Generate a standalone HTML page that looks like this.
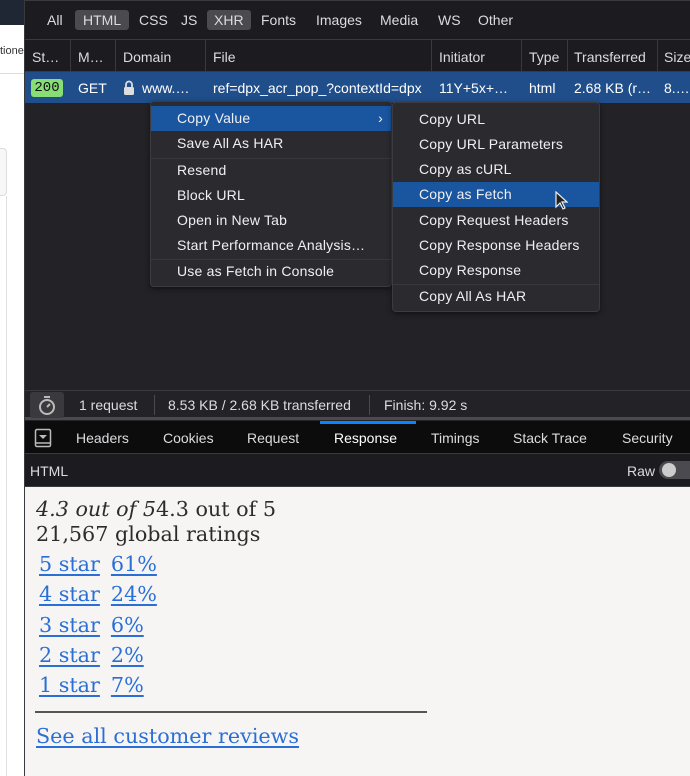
<!DOCTYPE html>
<html><head><meta charset="utf-8"><style>
*{margin:0;padding:0;box-sizing:border-box}
body{width:690px;height:776px;overflow:hidden;position:relative;background:#fff;font-family:"Liberation Sans",sans-serif;font-size:14px}
.a{position:absolute;white-space:nowrap}
.dt{color:#dcdcde}
.m{background:#2b2a2f;border:1px solid #3c3b40;border-radius:4px;box-shadow:0 2px 6px rgba(0,0,0,.5)}
.mi{position:absolute;left:0;right:0;height:25px;line-height:25px;color:#f0f0f2;letter-spacing:0.2px}
.sep{position:absolute;left:0;right:0;height:1px;background:#38373c}
.r{font-family:"DejaVu Serif",serif;font-size:20.7px;color:#2c2c2c}
.lk{color:#2a6fd6;text-decoration:underline;text-underline-offset:3px}
.p{margin-left:11px}
</style></head><body>
<div class="a" style="left:0;top:0;width:24px;height:25px;background:#1e2733"></div>
<div class="a" style="left:0;top:45px;font-size:11px;color:#333">tione</div>
<div class="a" style="left:0;top:73px;width:24px;height:1px;background:#ddd"></div>
<div class="a" style="left:-6px;top:148px;width:13px;height:48px;border:1px solid #ddd;border-radius:4px;background:#f7f7f7"></div>
<div class="a" style="left:6px;top:196px;width:1px;height:580px;background:#e0e0e0"></div>
<div class="a" style="left:24px;top:0;width:666px;height:487px;background:#232327;border-left:1px solid #3a3a3e"></div>
<div class="a" style="left:25px;top:0;width:665px;height:40px;background:#1c1b20;border-top:1px solid #3a3a3e;border-bottom:1px solid #3a3a3e"></div>
<div class="a" style="left:75px;top:10px;width:54px;height:20px;background:#4a4a4f;border-radius:3px"></div>
<div class="a" style="left:207px;top:10px;width:44px;height:20px;background:#4a4a4f;border-radius:3px"></div>
<div class="a dt" style="left:47px;top:12px">All</div>
<div class="a dt" style="left:83px;top:12px">HTML</div>
<div class="a dt" style="left:139px;top:12px">CSS</div>
<div class="a dt" style="left:181px;top:12px">JS</div>
<div class="a dt" style="left:214px;top:12px">XHR</div>
<div class="a dt" style="left:261px;top:12px">Fonts</div>
<div class="a dt" style="left:316px;top:12px">Images</div>
<div class="a dt" style="left:380px;top:12px">Media</div>
<div class="a dt" style="left:438px;top:12px">WS</div>
<div class="a dt" style="left:478px;top:12px">Other</div>
<div class="a" style="left:25px;top:40px;width:665px;height:32px;background:#1c1b20;border-bottom:1px solid #3a3a3e"></div>
<div class="a" style="left:70px;top:40px;width:1px;height:32px;background:#3a3a3e"></div>
<div class="a" style="left:115px;top:40px;width:1px;height:32px;background:#3a3a3e"></div>
<div class="a" style="left:205px;top:40px;width:1px;height:32px;background:#3a3a3e"></div>
<div class="a" style="left:431px;top:40px;width:1px;height:32px;background:#3a3a3e"></div>
<div class="a" style="left:521px;top:40px;width:1px;height:32px;background:#3a3a3e"></div>
<div class="a" style="left:567px;top:40px;width:1px;height:32px;background:#3a3a3e"></div>
<div class="a" style="left:657px;top:40px;width:1px;height:32px;background:#3a3a3e"></div>
<div class="a dt" style="left:32px;top:49px">St…</div>
<div class="a dt" style="left:78px;top:49px">M…</div>
<div class="a dt" style="left:123px;top:49px">Domain</div>
<div class="a dt" style="left:213px;top:49px">File</div>
<div class="a dt" style="left:439px;top:49px">Initiator</div>
<div class="a dt" style="left:529px;top:49px">Type</div>
<div class="a dt" style="left:574px;top:49px">Transferred</div>
<div class="a dt" style="left:664px;top:49px">Size</div>
<div class="a" style="left:25px;top:72px;width:665px;height:31px;background:#204e8a"></div>
<div class="a" style="left:31px;top:79px;width:32px;height:18px;background:#86de74;border-radius:3px;color:#111;font-family:'Liberation Mono',monospace;font-size:14px;line-height:18px;text-align:center">200</div>
<div class="a" style="color:#fff;left:78px;top:80px">GET</div>
<svg class="a" style="left:123px;top:80px" width="12" height="15" viewBox="0 0 12 15"><path d="M3 7V4.5a3 3 0 0 1 6 0V7" fill="none" stroke="#ddd" stroke-width="1.8"/><rect x="1" y="7" width="10" height="8" rx="1.5" fill="#ddd"/></svg>
<div class="a" style="color:#fff;left:142px;top:80px">www.…</div>
<div class="a" style="color:#fff;left:213px;top:80px">ref=dpx_acr_pop_?contextId=dpx</div>
<div class="a" style="color:#fff;left:439px;top:80px">11Y+5x+…</div>
<div class="a" style="color:#fff;left:529px;top:80px">html</div>
<div class="a" style="color:#fff;left:574px;top:80px">2.68 KB (r…</div>
<div class="a" style="color:#fff;left:664px;top:80px">8.…</div>
<div class="a m" style="left:150px;top:101px;width:242px;height:186px">
<div class="mi" style="top:4px;background:#1a55a0;padding-left:26px">Copy Value<span style="position:absolute;right:8px">›</span></div>
<div class="mi" style="top:29px;padding-left:26px">Save All As HAR</div>
<div class="sep" style="top:56px"></div>
<div class="mi" style="top:56px;padding-left:26px">Resend</div>
<div class="mi" style="top:81px;padding-left:26px">Block URL</div>
<div class="mi" style="top:106px;padding-left:26px">Open in New Tab</div>
<div class="mi" style="top:131px;padding-left:26px">Start Performance Analysis…</div>
<div class="sep" style="top:157px"></div>
<div class="mi" style="top:157px;padding-left:26px">Use as Fetch in Console</div>
</div>
<div class="a m" style="left:392px;top:102px;width:208px;height:210px">
<div class="mi" style="top:4px;padding-left:26px">Copy URL</div>
<div class="mi" style="top:29px;padding-left:26px">Copy URL Parameters</div>
<div class="mi" style="top:54px;padding-left:26px">Copy as cURL</div>
<div class="mi" style="top:79px;background:#1a55a0;padding-left:26px">Copy as Fetch</div>
<div class="mi" style="top:105px;padding-left:26px">Copy Request Headers</div>
<div class="mi" style="top:130px;padding-left:26px">Copy Response Headers</div>
<div class="mi" style="top:155px;padding-left:26px">Copy Response</div>
<div class="sep" style="top:181px"></div>
<div class="mi" style="top:181px;padding-left:26px">Copy All As HAR</div>
</div>
<svg class="a" style="left:555px;top:191px" width="13" height="20" viewBox="0 0 13 20"><path d="M1 1v15l4-4 3 6 2-1-3-6h5z" fill="#222" stroke="#eee" stroke-width="1.2"/></svg>
<div class="a" style="left:25px;top:390px;width:665px;height:30px;background:#232327;border-top:1px solid #3a3a3e;border-bottom:3px solid #4a4a4f"></div>
<div class="a" style="left:30px;top:392px;width:34px;height:26px;background:#3a3a3e;border-radius:3px"></div>
<svg class="a" style="left:37px;top:393px" width="20" height="24" viewBox="0 0 20 24"><circle cx="10" cy="14" r="7" fill="none" stroke="#bbb" stroke-width="2"/><path d="M7 4h6M10 14l3-3" stroke="#bbb" stroke-width="2" fill="none"/></svg>
<div class="a dt" style="left:79px;top:397px">1 request</div>
<div class="a" style="left:154px;top:395px;width:1px;height:20px;background:#4a4a4f"></div>
<div class="a dt" style="left:168px;top:397px">8.53 KB / 2.68 KB transferred</div>
<div class="a" style="left:369px;top:395px;width:1px;height:20px;background:#4a4a4f"></div>
<div class="a dt" style="left:384px;top:397px">Finish: 9.92 s</div>
<div class="a" style="left:25px;top:421px;width:665px;height:33px;background:#0c0c0d;border-bottom:1px solid #3a3a3e"></div>
<div class="a" style="left:320px;top:421px;width:96px;height:3px;background:#0a84ff"></div>
<svg class="a" style="left:34px;top:428px" width="18" height="20" viewBox="0 0 18 20"><rect x="1.5" y="1.5" width="15" height="17" rx="1.5" fill="none" stroke="#bbb" stroke-width="1.5"/><path d="M5 7h8l-4 4z" fill="#bbb"/><path d="M2 15h14" stroke="#bbb" stroke-width="1.5"/></svg>
<div class="a dt" style="left:76px;top:430px">Headers</div>
<div class="a dt" style="left:163px;top:430px">Cookies</div>
<div class="a dt" style="left:247px;top:430px">Request</div>
<div class="a" style="color:#fff;left:334px;top:430px">Response</div>
<div class="a dt" style="left:431px;top:430px">Timings</div>
<div class="a dt" style="left:513px;top:430px">Stack Trace</div>
<div class="a dt" style="left:622px;top:430px">Security</div>
<div class="a" style="left:25px;top:454px;width:665px;height:33px;background:#1c1b20;border-bottom:1px solid #3a3a3e"></div>
<div class="a dt" style="left:30px;top:463px;font-size:14px">HTML</div>
<div class="a dt" style="left:627px;top:463px">Raw</div>
<div class="a" style="left:659px;top:461px;width:40px;height:18px;background:#4a4a4f;border-radius:9px"></div>
<div class="a" style="left:662px;top:463px;width:14px;height:14px;background:#ccc;border-radius:7px"></div>
<div class="a" style="left:24px;top:487px;width:666px;height:289px;background:#f6f5f3;border-left:1px solid #3a3a3e"></div>
<div class="a r" style="left:36px;top:497px"><i>4.3 out of 5</i>4.3 out of 5</div>
<div class="a r" style="left:36px;top:522px">21,567 global ratings</div>
<div class="a r" style="left:39px;top:552px"><span class="lk">5 star</span><span class="lk p">61%</span></div>
<div class="a r" style="left:39px;top:582px"><span class="lk">4 star</span><span class="lk p">24%</span></div>
<div class="a r" style="left:39px;top:613px"><span class="lk">3 star</span><span class="lk p">6%</span></div>
<div class="a r" style="left:39px;top:643px"><span class="lk">2 star</span><span class="lk p">2%</span></div>
<div class="a r" style="left:39px;top:673px"><span class="lk">1 star</span><span class="lk p">7%</span></div>
<div class="a" style="left:35px;top:711px;width:392px;height:2px;background:#555"></div>
<div class="a r" style="left:36px;top:724px"><span class="lk">See all customer reviews</span></div>
</body></html>
